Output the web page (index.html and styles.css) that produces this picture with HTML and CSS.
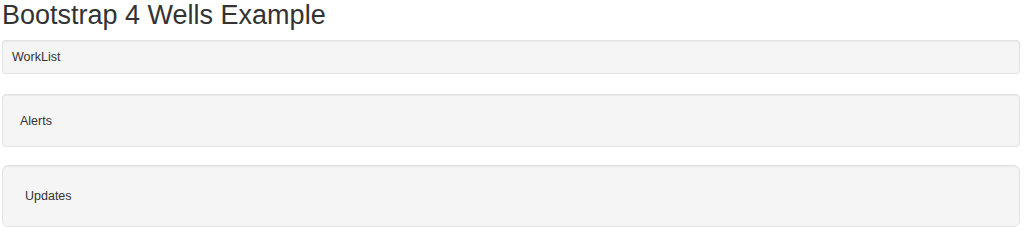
FILE: index.html
```html
<!DOCTYPE html>
<html lang="en">
<head>
    <meta charset="UTF-8">
    <title>Bootstrap 4 Wells Example</title>
    <link rel="stylesheet" href="styles.css">
</head>
<body>
    <div class="container">
        <h1>Bootstrap 4 Wells Example</h1>
        <div class="well well-sm">WorkList</div>
        <div class="well">Alerts</div>
        <div class="well well-lg">Updates</div>
    </div>
</body>
</html>
```

FILE: styles.css
```css
body {
    margin: 0;
    font-family: "Liberation Sans", Arial, sans-serif;
    font-size: 12.5px;
    line-height: 16px;
    color: #333;
    background: #fff;
}
.container {
    padding: 0 4px 0 2px;
}
h1 {
    font-size: 27px;
    font-weight: normal;
    line-height: 28px;
    margin: 1px 0 11px;
}
.well {
    background-color: #f5f5f5;
    border: 1px solid #e3e3e3;
    border-radius: 4px;
    box-shadow: inset 0 1px 1px rgba(0, 0, 0, 0.05);
    padding: 17.5px 17px;
    margin-bottom: 18px;
}
.well-sm {
    padding: 8px 9px;
    border-radius: 3px;
    margin-bottom: 20px;
}
.well-lg {
    padding: 22px 22px;
    border-radius: 6px;
    margin-bottom: 0;
}
```
